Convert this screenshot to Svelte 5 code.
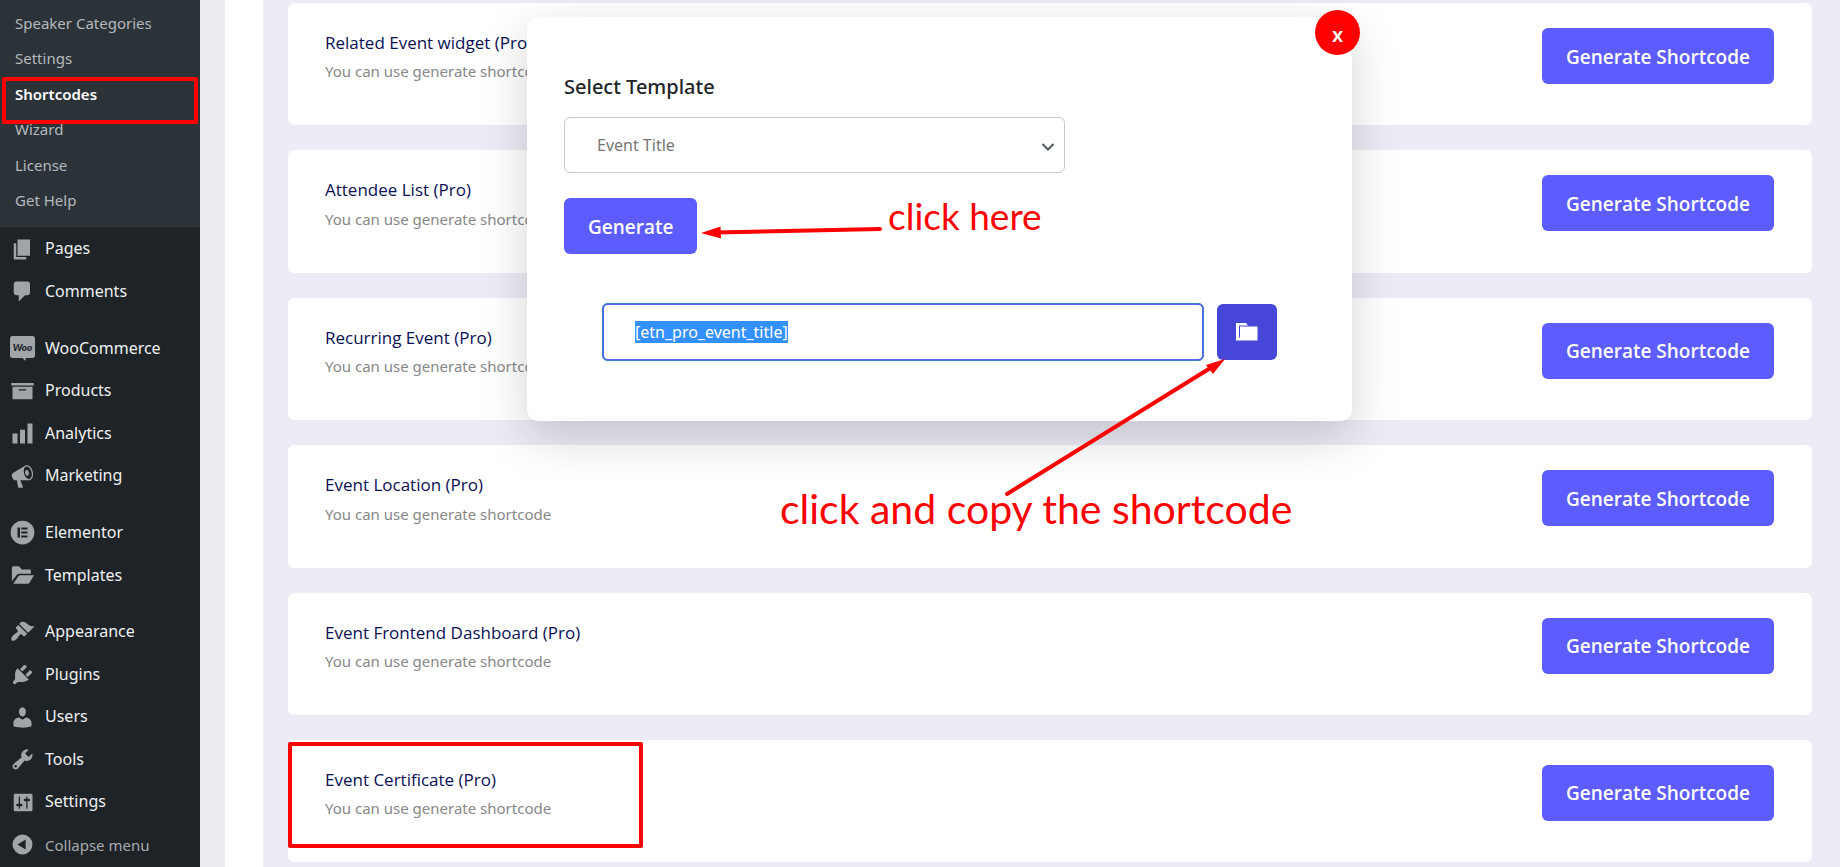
<script lang="ts">
  import { onMount } from 'svelte';

  const submenu = ['Speaker Categories', 'Settings', 'Shortcodes', 'Wizard', 'License', 'Get Help'];
  const currentItem = 'Shortcodes';

  // Menu groups, split by separators
  const menuGroups = [
    [
      { label: 'Pages', icon: 'M6 15V2h10v13H6zm-1 1h8v2H3V5h2v11z' },
      { label: 'Comments', icon: 'M5 2h9c1.1 0 2 .9 2 2v7c0 1.1-.9 2-2 2h-2l-5 5v-5H5c-1.1 0-2-.9-2-2V4c0-1.1.9-2 2-2z' },
    ],
    [
      { label: 'WooCommerce', icon: 'woo' },
      { label: 'Products', icon: 'M19 4v2H1V4h18zM2 7h16v10H2V7zm11 3V9H7v1h6z' },
      { label: 'Analytics', icon: 'M18 18V2h-4v16h4zm-6 0V7H8v11h4zm-6 0v-8H2v8h4z' },
      { label: 'Marketing', icon: 'M18.15 5.94c.46 1.62.38 3.22-.02 4.48-.42 1.28-1.26 2.18-2.3 2.48-.16.06-.26.06-.4.06-.06.02-.12.02-.18.02-.06.02-.14.02-.22.02h-6.8l2.22 5.5c.02.14-.06.26-.14.34-.08.1-.24.16-.34.16H6.95c-.1 0-.26-.06-.34-.16-.08-.08-.16-.2-.14-.34l-1-5.5H4.25l-.02-.02c-.5.06-1.08-.18-1.54-.62s-.88-1.08-1.06-1.88c-.24-.8-.2-1.56-.02-2.2.18-.62.58-1.08 1.06-1.3l.02-.02 9-5.4c.1-.06.18-.1.24-.16.06-.04.14-.08.24-.12.16-.08.28-.12.5-.18 1.04-.3 2.24.1 3.22.98s1.84 2.24 2.26 3.86zm-2.58 5.98h-.02c.4-.1.74-.34 1.04-.7.58-.7.86-1.76.86-3.04 0-.64-.1-1.3-.28-1.98-.34-1.36-1.02-2.5-1.78-3.24s-1.68-1.1-2.46-.88c-.82.22-1.4.96-1.7 2-.32 1.04-.28 2.36.06 3.72.38 1.36 1 2.5 1.8 3.24.78.74 1.62 1.1 2.48.88zm-2.54-7.08c.22-.04.42-.02.62.04.38.16.76.48 1.02 1s.42 1.2.42 1.78c0 .3-.04.56-.12.8-.18.48-.44.84-.86.94-.34.1-.8-.06-1.14-.4s-.64-.86-.78-1.5c-.18-.62-.12-1.24.02-1.72s.48-.84.82-.94z' },
    ],
    [
      { label: 'Elementor', icon: 'M10 0.5a9.5 9.5 0 1 0 0 19a9.5 9.5 0 1 0 0-19zM6 6h2v8H6zM9 6h5v1.6H9zM9 9.2h5v1.6H9zM9 12.4h5V14H9z' },
      { label: 'Templates', icon: 'M1.5 14.5V4c0-.8.6-1.5 1.4-1.5h4.2l2.4 2.7h6.3c.5 0 .9.4.9.9V8.6H7.2c-.6 0-1.1.2-1.5.6zM2.6 16.6l4.2-6.2c.3-.5.7-.7 1.3-.7h11.2l-3.9 6.2c-.3.5-.7.7-1.3.7z' },
    ],
    [
      { label: 'Appearance', icon: 'M14.48 11.06L7.41 3.99l1.5-1.5c.5-.56 2.3-.47 3.51.32 1.21.8 1.43 1.28 2.91 2.1 1.18.64 2.45 1.26 4.45.85zm-.71.71L6.7 4.7 4.93 6.47c-.39.39-.39 1.02 0 1.41l1.06 1.06c.39.39.39 1.03 0 1.42-.6.6-1.43 1.11-2.21 1.69-.35.26-.7.53-1.01.84C1.43 14.23.4 16.08 1.4 17.07c.99 1 2.84-.03 4.18-1.36.31-.31.58-.66.85-1.02.57-.78 1.08-1.61 1.69-2.21.39-.39 1.02-.39 1.41 0l1.06 1.06c.39.39 1.02.39 1.41 0z' },
      { label: 'Plugins', icon: 'M13.11 4.36L9.87 7.6 8 5.73l3.24-3.24c.35-.34 1.05-.2 1.56.32.52.51.66 1.21.31 1.55zm-8 1.77l.91-1.12 9.01 9.01-1.19.84c-.71.71-2.63 1.16-3.82 1.16H6.14L4.9 17.26c-.59.59-1.54.59-2.12 0-.59-.58-.59-1.53 0-2.12l1.24-1.24v-3.88c0-1.13.4-3.19 1.09-3.89zm7.26 3.97l3.24-3.24c.34-.35 1.04-.21 1.55.31.52.51.66 1.21.31 1.55l-3.24 3.25z' },
      { label: 'Users', icon: 'M10 9.25c-2.27 0-2.73-3.44-2.73-3.44C7 4.02 7.82 2 9.97 2c2.16 0 2.98 2.02 2.71 3.81 0 0-.41 3.44-2.68 3.44zm0 2.57L12.72 10c2.39 0 4.52 2.33 4.52 4.53v2.49s-3.65 1.13-7.24 1.13c-3.65 0-7.24-1.13-7.24-1.13v-2.49c0-2.25 1.94-4.48 4.47-4.48z' },
      { label: 'Tools', icon: 'M16.68 9.77c-1.34 1.34-3.3 1.67-4.95.99l-5.41 6.52c-.99.99-2.59.99-3.58 0s-.99-2.59 0-3.57l6.52-5.42c-.68-1.65-.35-3.61.99-4.95 1.28-1.28 3.12-1.62 4.72-1.06l-2.89 2.89 2.82 2.82 2.86-2.87c.53 1.58.18 3.39-1.08 4.65zM3.81 16.21c.4.39 1.04.39 1.43 0 .4-.4.4-1.04 0-1.43-.39-.4-1.03-.4-1.43 0-.39.39-.39 1.03 0 1.43z' },
      { label: 'Settings', icon: 'M18 16V4c0-.55-.45-1-1-1H4c-.55 0-1 .45-1 1v12c0 .55.45 1 1 1h13c.55 0 1-.45 1-1zM8 11h1c.55 0 1 .45 1 1s-.45 1-1 1H8v1.5c0 .28-.22.5-.5.5s-.5-.22-.5-.5V13H6c-.55 0-1-.45-1-1s.45-1 1-1h1V5.5c0-.28.22-.5.5-.5s.5.22.5.5V11zm5-2h-1c-.55 0-1-.45-1-1s.45-1 1-1h1V5.5c0-.28.22-.5.5-.5s.5.22.5.5V7h1c.55 0 1 .45 1 1s-.45 1-1 1h-1v5.5c0 .28-.22.5-.5.5s-.5-.22-.5-.5V9z' },
    ],
  ];

  const shortcodes = [
    'Related Event widget (Pro)',
    'Attendee List (Pro)',
    'Recurring Event (Pro)',
    'Event Location (Pro)',
    'Event Frontend Dashboard (Pro)',
    'Event Certificate (Pro)',
  ];
  const highlighted = 'Event Certificate (Pro)';

  let template = $state('Event Title');
  let shortcode = $state('[etn_pro_event_title]');
  let modalOpen = $state(true);
  let shortcodeInput: HTMLInputElement | undefined = $state();

  function generate() {
    shortcode = `[etn_pro_${template.toLowerCase().replace(/ /g, '_')}]`;
  }

  function selectShortcode() {
    shortcodeInput?.focus();
    shortcodeInput?.select();
  }

  onMount(selectShortcode);
</script>

<div class="page">
  <nav class="sidebar">
    <ul class="submenu">
      {#each submenu as item}
        <li class:current={item === currentItem}><a href="#{item}">{item}</a></li>
      {/each}
    </ul>

    {#each menuGroups as group}
      <ul class="menu">
        {#each group as item}
          <li>
            <a href="#{item.label}">
              <svg class="icon" viewBox="0 0 20 20" aria-hidden="true">
                {#if item.icon === 'woo'}
                  <path d="M2 0h16q2 0 2 2v13.500q0 2-2 2h-5.500l0 2.500l-2.500-2.500H2q-2 0-2-2V2q0-2 2-2z" />
                  <text class="woo" x="10" y="12" text-anchor="middle">Woo</text>
                {:else}
                  <path fill-rule="evenodd" d={item.icon} />
                {/if}
              </svg>
              {item.label}
            </a>
          </li>
        {/each}
      </ul>
    {/each}

    <button class="collapse" type="button">
      <svg class="icon" viewBox="0 0 20 20" aria-hidden="true">
        <path fill-rule="evenodd" d="M10 2a8 8 0 1 0 0 16a8 8 0 1 0 0-16zM12.500 14V6L6 10z" />
      </svg>
      Collapse menu
    </button>
  </nav>

  <main class="content">
    <div class="cards">
      {#each shortcodes as title}
        <section class="card" class:highlighted={title === highlighted}>
          <div>
            <h3>{title}</h3>
            <p>You can use generate shortcode</p>
          </div>
          <button class="btn" type="button" onclick={() => (modalOpen = true)}>Generate Shortcode</button>
        </section>
      {/each}
    </div>
  </main>

  {#if modalOpen}
    <div class="modal" role="dialog" aria-label="Generate shortcode">
      <button class="close" type="button" onclick={() => (modalOpen = false)}>x</button>
      <label class="modal-title" for="template">Select Template</label>
      <div class="select-wrap">
        <select id="template" bind:value={template}>
          <option>Event Title</option>
        </select>
        <svg class="chevron" viewBox="0 0 14 10" aria-hidden="true"><path d="M1.500 2L7 7.500L12.500 2" /></svg>
      </div>
      <button class="btn" type="button" onclick={generate}>Generate</button>
      <div class="result">
        <input type="text" aria-label="Shortcode" bind:this={shortcodeInput} bind:value={shortcode} />
        <button class="copy" type="button" aria-label="Copy shortcode" onclick={selectShortcode}>
          <svg viewBox="0 0 22 18" aria-hidden="true">
            <path d="M0 0h10l2 2.500H3V14.500H4V3.500H21.500V17.500H0z" />
          </svg>
        </button>
      </div>
    </div>
  {/if}

  <!-- Annotations drawn over the page -->
  <svg class="arrows" viewBox="0 0 1840 867" aria-hidden="true">
    <path class="line" d="M880 229L716 232.500M1007 494L1212 367" />
    <path class="head" d="M701 233L720.500 226.500L721 238.500zM1225 359L1206 365L1213 374z" />
  </svg>
  <span class="note note-generate">click here</span>
  <span class="note note-copy">click and copy the shortcode</span>
</div>

<style>
  :global(body) {
    margin: 0;
    background: #fff;
  }

  .page {
    position: relative;
    display: flex;
    height: 100vh;
    overflow: hidden;
    font-family: "Noto Sans", "Open Sans", sans-serif;
    background: #ebecf0;
  }

  button,
  input,
  select {
    font-family: inherit;
    box-sizing: border-box;
  }

  ul,
  h3,
  p {
    margin: 0;
    padding: 0;
    list-style: none;
  }

  /* Sidebar */
  .sidebar {
    flex: 0 0 200px;
    background: #1d2327;
  }

  .submenu {
    padding: 6px 0 9px;
    background: #2c3338;
  }

  .submenu li {
    position: relative;
  }

  .submenu a {
    display: block;
    padding: 7px 15px 8px;
    font-size: 15px;
    line-height: 1.36;
    color: #b4b9be;
    text-decoration: none;
  }

  .submenu .current a {
    font-weight: 600;
    color: #fff;
  }

  .submenu .current::after {
    content: "";
    position: absolute;
    inset: 0 2px -12px;
    border: 4px solid #f00;
    border-radius: 2px;
  }

  .menu + .menu {
    margin-top: 14px;
  }

  .menu a,
  .collapse {
    display: flex;
    align-items: center;
    gap: 10px;
    padding: 9px 10px 8px;
    font-size: 16px;
    line-height: 1.6;
    color: #f0f0f1;
    text-decoration: none;
  }

  .collapse {
    border: 0;
    background: none;
    font-size: 15px;
    color: #a7aaad;
  }

  .icon {
    flex: none;
    width: 25px;
    height: 25px;
    fill: #a0a5aa;
  }

  .woo {
    font: italic 900 8px Lato, sans-serif;
    fill: #1d2327;
  }

  /* Shortcode list */
  .content {
    flex: 1;
    margin-left: 25px;
    padding-left: 38px;
    background: #fff;
  }

  .cards {
    display: flex;
    flex-direction: column;
    gap: 25px;
    padding: 3px 28px 25px 25px;
    background: #ececf6;
  }

  .card {
    position: relative;
    display: flex;
    justify-content: space-between;
    align-items: flex-start;
    padding: 25px 38px 41px 37px;
    border-radius: 6px;
    background: #fff;
  }

  .card h3 {
    margin: 5px 0;
    font-family: "Open Sans", sans-serif;
    font-size: 17px;
    font-weight: 500;
    line-height: 1.2;
    color: #0a1055;
  }

  .card p {
    font-size: 15px;
    line-height: 26px;
    color: #888;
  }

  .highlighted::after {
    content: "";
    position: absolute;
    top: 2px;
    left: 0;
    width: 347px;
    height: 98px;
    border: 4px solid #f00;
    border-radius: 2px;
  }

  .btn {
    height: 56px;
    padding: 1px 24px 0;
    border: 0;
    border-radius: 6px;
    background: #5d5dff;
    color: #fff;
    font-family: "Open Sans", sans-serif;
    font-size: 19px;
    font-weight: 600;
  }

  /* Modal */
  .modal {
    position: absolute;
    top: 17px;
    left: 527px;
    display: flex;
    flex-direction: column;
    align-items: flex-start;
    width: 825px;
    padding: 56px 75px 60px 37px;
    box-sizing: border-box;
    border-radius: 12px;
    background: #fff;
    box-shadow: 0 16px 48px rgba(0, 0, 0, 0.175);
  }

  .close {
    position: absolute;
    top: -7px;
    right: -8px;
    width: 45px;
    height: 45px;
    padding: 4px 0 0;
    border: 0;
    border-radius: 50%;
    background: #f00;
    color: #fff;
    font-size: 20px;
    font-weight: 600;
    line-height: 1;
  }

  .modal-title {
    font-size: 20px;
    font-weight: 500;
    line-height: 28px;
    color: #212529;
  }

  .select-wrap {
    position: relative;
    width: 501px;
    margin: 16px 0 25px;
  }

  select {
    display: block;
    width: 100%;
    height: 56px;
    padding: 0 32px;
    border: 1px solid #c8cacd;
    border-radius: 6px;
    appearance: none;
    background: #fff;
    color: #777;
    font-size: 16px;
  }

  .chevron {
    position: absolute;
    top: 25px;
    right: 10px;
    width: 14px;
    height: 10px;
    fill: none;
    stroke: #50575e;
    stroke-width: 2;
    pointer-events: none;
  }

  .result {
    display: flex;
    align-items: center;
    gap: 13px;
    align-self: stretch;
    margin: 49px 0 0 38px;
  }

  input {
    flex: 1;
    height: 58px;
    padding: 0 31px;
    border: 2px solid #5d5dff;
    border-radius: 6px;
    outline: 1px solid #3582c4;
    outline-offset: -1px;
    background: #fff;
    color: #444;
    font-size: 16px;
  }

  input::selection {
    background: #3390ff;
    color: #fff;
  }

  .copy {
    display: flex;
    align-items: center;
    justify-content: center;
    width: 60px;
    height: 56px;
    padding: 0;
    border: 0;
    border-radius: 6px;
    background: #4646d8;
  }

  .copy svg {
    width: 22px;
    height: 18px;
    fill: #fff;
  }

  /* Annotations */
  .arrows {
    position: absolute;
    top: 0;
    left: 0;
    width: 1840px;
    height: 867px;
    pointer-events: none;
  }

  .line {
    fill: none;
    stroke: #f00;
    stroke-width: 4;
    stroke-linecap: round;
  }

  .head {
    fill: #f00;
  }

  .note {
    position: absolute;
    font-family: Lato, sans-serif;
    line-height: 48px;
    color: #f00;
    white-space: nowrap;
  }

  .note-generate {
    top: 192px;
    left: 888px;
    font-size: 37px;
  }

  .note-copy {
    top: 485px;
    left: 780px;
    font-size: 41px;
  }
</style>
